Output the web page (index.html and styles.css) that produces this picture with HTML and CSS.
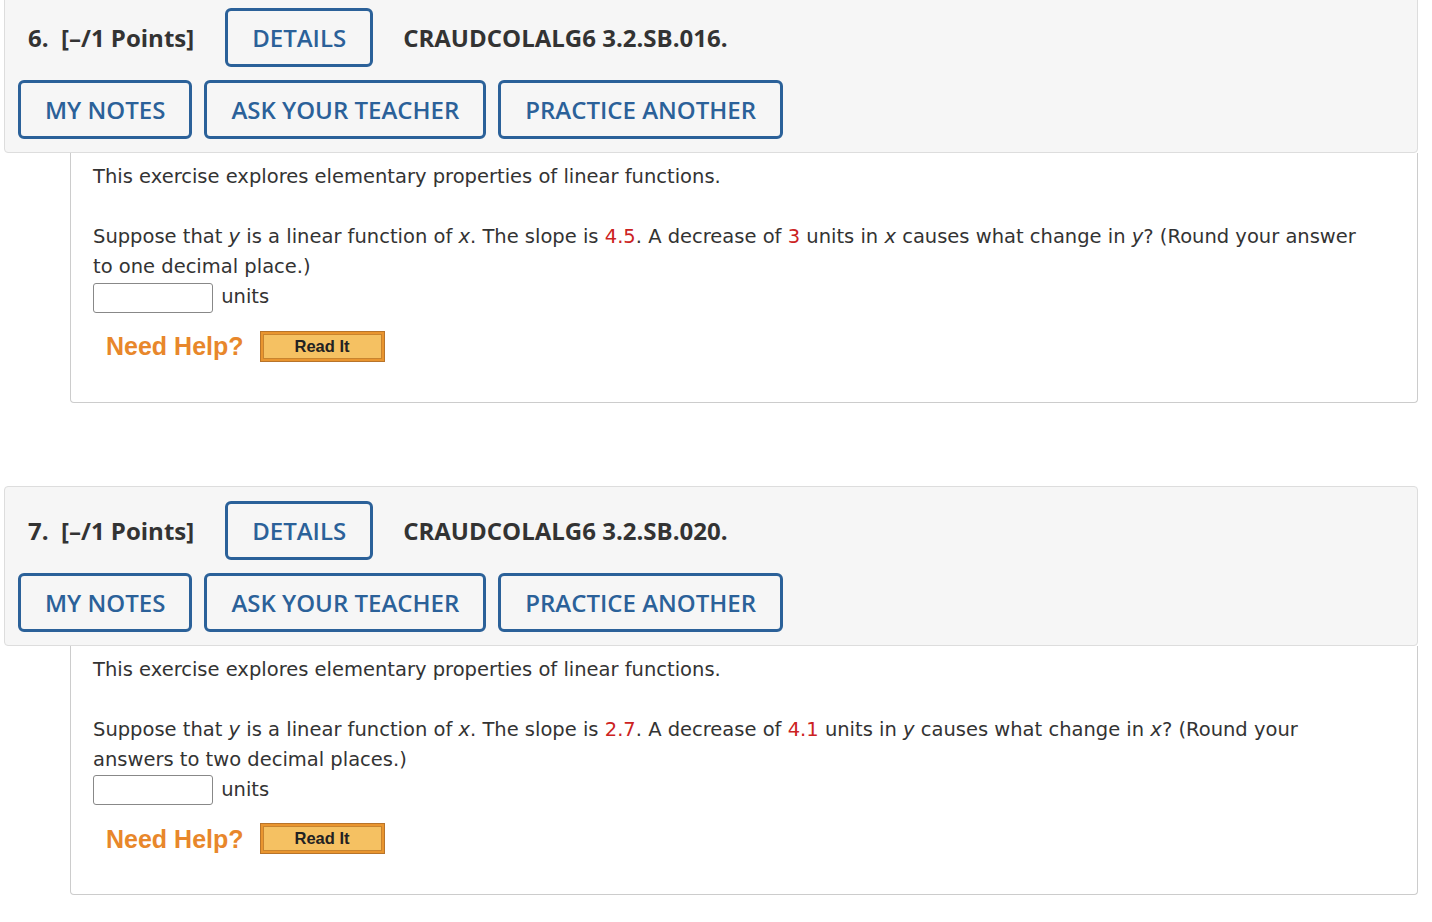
FILE: index.html
```html
<!DOCTYPE html>
<html lang="en">
<head>
    <meta charset="UTF-8">
    <title>Questions</title>
    <link rel="stylesheet" href="styles.css">
</head>
<body>
    <div class="question first">
        <div class="q-header">
            <div class="q-row">
                <span class="q-points">6.&nbsp; [&ndash;/1 Points]</span>
                <button class="q-btn">DETAILS</button>
                <span class="q-code">CRAUDCOLALG6 3.2.SB.016.</span>
            </div>
            <div class="q-row">
                <button class="q-btn">MY NOTES</button>
                <button class="q-btn">ASK YOUR TEACHER</button>
                <button class="q-btn">PRACTICE ANOTHER</button>
            </div>
        </div>
        <div class="q-body">
            <p>This exercise explores elementary properties of linear functions.</p>
            <p>Suppose that <i>y</i> is a linear function of <i>x</i>. The slope is <span class="num">4.5</span>. A decrease of <span class="num">3</span> units in <i>x</i> causes what change in <i>y</i>? (Round your answer to one decimal place.)<br>
            <input type="text" class="answer"> units</p>
            <div class="help">
                <span class="help-label">Need Help?</span>
                <button class="read-it"><span>Read It</span></button>
            </div>
        </div>
    </div>

    <div class="question">
        <div class="q-header">
            <div class="q-row">
                <span class="q-points">7.&nbsp; [&ndash;/1 Points]</span>
                <button class="q-btn">DETAILS</button>
                <span class="q-code">CRAUDCOLALG6 3.2.SB.020.</span>
            </div>
            <div class="q-row">
                <button class="q-btn">MY NOTES</button>
                <button class="q-btn">ASK YOUR TEACHER</button>
                <button class="q-btn">PRACTICE ANOTHER</button>
            </div>
        </div>
        <div class="q-body">
            <p>This exercise explores elementary properties of linear functions.</p>
            <p>Suppose that <i>y</i> is a linear function of <i>x</i>. The slope is <span class="num">2.7</span>. A decrease of <span class="num">4.1</span> units in <i>y</i> causes what change in <i>x</i>? (Round your answers to two decimal places.)<br>
            <input type="text" class="answer"> units</p>
            <div class="help">
                <span class="help-label">Need Help?</span>
                <button class="read-it"><span>Read It</span></button>
            </div>
        </div>
    </div>
</body>
</html>
```

FILE: styles.css
```css
body {
    margin: 0;
    padding: 0;
    background-color: #fff;
    font-family: "DejaVu Sans", Verdana, sans-serif;
    color: #333;
}
.question {
    margin: 83px 14px 0 4px;
}
.question.first {
    margin-top: -7px;
}
.q-header {
    background-color: #f6f6f6;
    border: 1px solid #ddd;
    border-radius: 4px;
    padding: 14px 13px 13px 13px;
    display: flex;
    flex-direction: column;
    gap: 13px;
}
.q-row {
    display: flex;
    align-items: center;
    gap: 12px;
}
.q-points {
    font-family: "Open Sans", sans-serif;
    font-weight: 700;
    font-size: 24px;
    color: #333;
    margin-left: 10px;
    margin-right: 19px;
}
.q-code {
    font-family: "Open Sans", sans-serif;
    font-weight: 700;
    font-size: 24px;
    color: #333;
    margin-left: 18px;
}
.q-btn {
    height: 59px;
    padding: 0 24px;
    background: transparent;
    border: 3px solid #2b6199;
    border-radius: 6px;
    color: #2b6199;
    font-family: "Open Sans", sans-serif;
    font-weight: 600;
    font-size: 24px;
}
.q-body {
    margin-left: 66px;
    border: 1px solid #ccc;
    border-top: none;
    border-radius: 0 0 4px 4px;
    padding: 9px 40px 40px 22px;
    font-size: 19.5px;
    line-height: 30px;
}
.q-body p {
    margin: 0 0 30px 0;
}
.q-body p:last-of-type {
    margin-bottom: 0;
}
.num {
    color: #cc2222;
}
.answer {
    box-sizing: border-box;
    width: 120px;
    height: 30px;
    padding: 0;
    border: 1px solid #888;
    border-radius: 3px;
    vertical-align: middle;
    margin-right: 2px;
}
.help {
    display: flex;
    align-items: center;
    gap: 16px;
    margin-top: 18px;
    padding-left: 13px;
}
.help-label {
    font-family: "Liberation Sans", Arial, sans-serif;
    font-weight: 700;
    font-size: 25px;
    color: #e8872b;
}
.read-it {
    box-sizing: border-box;
    width: 125px;
    height: 31px;
    padding: 2px;
    background: #e9952f;
    border: 1px solid #b8742a;
    display: flex;
}
.read-it span {
    flex: 1;
    background: #f5c162;
    border: 1px solid #c9842e;
    font-family: "Liberation Sans", Arial, sans-serif;
    font-weight: 700;
    font-size: 16.5px;
    color: #222;
    display: flex;
    align-items: center;
    justify-content: center;
}
```
